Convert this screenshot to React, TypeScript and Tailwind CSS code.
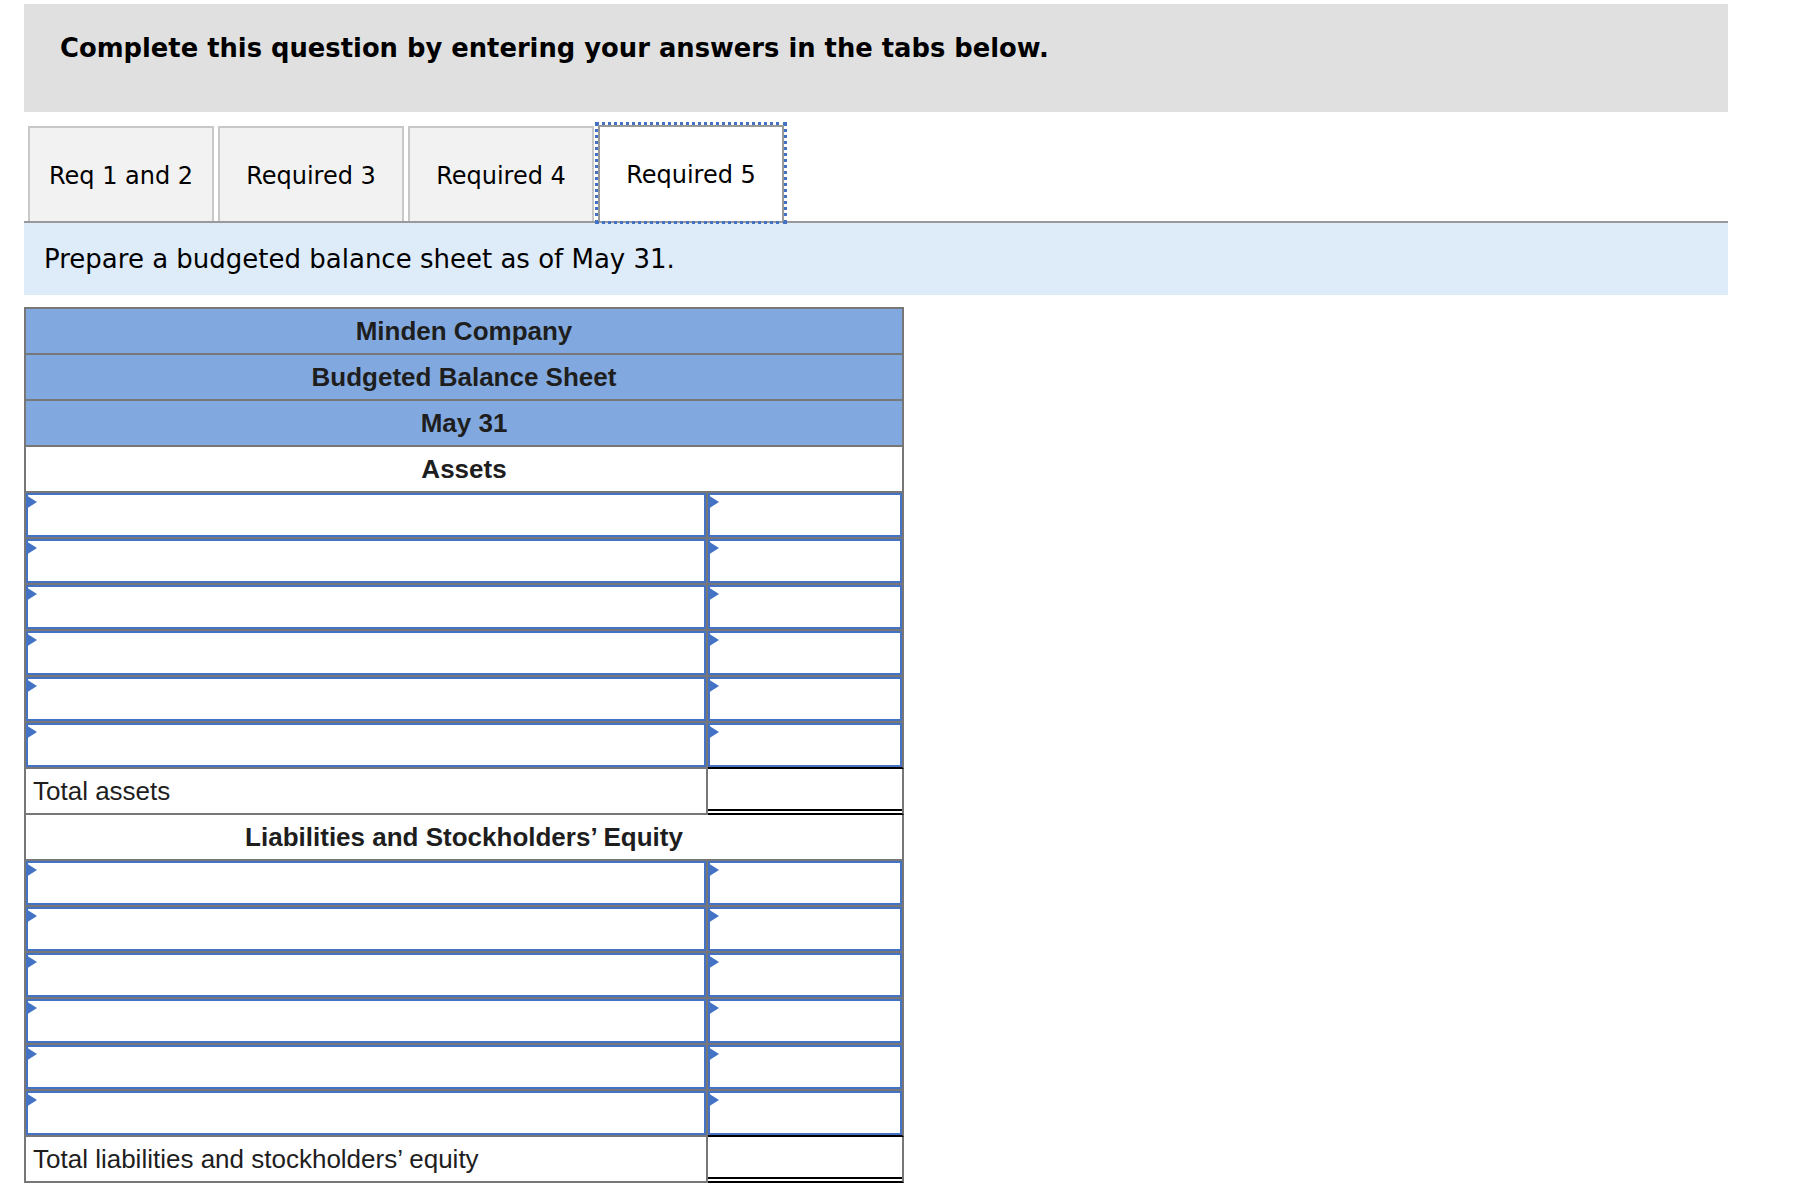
import React from "react";

const VERDANA = { fontFamily: '"DejaVu Sans", Verdana, sans-serif' };
const ARIAL = { fontFamily: '"Liberation Sans", Arial, sans-serif' };

function Tri() {
  return (
    <svg
      className="absolute left-[-2px] top-0"
      width="11"
      height="14"
      viewBox="0 0 11 14"
    >
      <polygon points="0,0 11,7 0,14" fill="#4472c4" />
    </svg>
  );
}

function InputRow({ last }: { last?: boolean }) {
  return (
    <div className="flex h-[46px]">
      <div className="w-[682px] border-r-2 border-b-2 border-r-[#777] border-b-[#777]">
        <div className="relative h-full border-2 border-[#4472c4] bg-white">
          <Tri />
        </div>
      </div>
      <div
        className={
          last
            ? "w-[196px] border-r-2 border-b-2 border-r-[#777] border-b-black"
            : "w-[196px] border-r-2 border-b-2 border-r-[#777] border-b-[#777]"
        }
      >
        <div className="relative h-full border-2 border-[#4472c4] bg-white">
          <Tri />
        </div>
      </div>
    </div>
  );
}

function HeaderRow({ text, blue }: { text: string; blue?: boolean }) {
  return (
    <div
      className={
        blue
          ? "flex h-[46px] items-center justify-center border-r-2 border-b-2 border-[#777] bg-[#82a9df] text-[26px] font-bold text-[#1e1e1e]"
          : "flex h-[46px] items-center justify-center border-r-2 border-b-2 border-[#777] bg-white text-[26px] font-bold text-[#1e1e1e]"
      }
    >
      {text}
    </div>
  );
}

function TotalRow({ text }: { text: string }) {
  return (
    <div className="flex h-[46px]">
      <div className="flex w-[682px] items-center border-r-2 border-b-2 border-[#777] pl-[7px] text-[26px] text-[#1e1e1e]">
        {text}
      </div>
      <div className="flex w-[196px] flex-col border-r-2 border-b-2 border-r-[#777] border-b-black">
        <div className="flex-1 border-b-2 border-black" />
        <div className="h-[2px]" />
      </div>
    </div>
  );
}

function Tab({ label, active }: { label: string; active?: boolean }) {
  if (active) {
    return (
      <div className="relative z-10 flex h-[96px] w-[186px] items-center justify-center border-x-2 border-t-2 border-[#999] bg-white pt-[2px] text-[24px] text-black outline-[3px] outline-dotted outline-[#4472c4]">
        {label}
      </div>
    );
  }
  return (
    <div className="flex h-[95px] w-[186px] items-center justify-center border-x-2 border-t-2 border-[#c8c8c8] bg-[#f2f2f2] pt-[2px] text-[24px] text-black">
      {label}
    </div>
  );
}

export default function App() {
  return (
    <div className="min-h-[1196px] w-[1800px] bg-white pl-[24px] pt-[4px]">
      <div className="w-[1704px]" style={VERDANA}>
        <div className="h-[108px] bg-[#e0e0e0] pl-[36px] pt-[29px] text-[25.8px] font-bold leading-[1.2] text-black">
          Complete this question by entering your answers in the tabs below.
        </div>
        <div className="mt-[13px] flex items-end gap-[4px] border-b-2 border-[#999] pl-[4px]">
          <Tab label="Req 1 and 2" />
          <Tab label="Required 3" />
          <Tab label="Required 4" />
          <Tab label="Required 5" active />
        </div>
        <div className="flex h-[72px] items-center bg-[#deebf8] pl-[20px] text-[26px] text-black">
          Prepare a budgeted balance sheet as of May 31.
        </div>
      </div>
      <div
        className="mt-[12px] w-[880px] border-l-2 border-t-2 border-[#777]"
        style={ARIAL}
      >
        <HeaderRow text="Minden Company" blue />
        <HeaderRow text="Budgeted Balance Sheet" blue />
        <HeaderRow text="May 31" blue />
        <HeaderRow text="Assets" />
        <InputRow />
        <InputRow />
        <InputRow />
        <InputRow />
        <InputRow />
        <InputRow last />
        <TotalRow text="Total assets" />
        <HeaderRow text="Liabilities and Stockholders’ Equity" />
        <InputRow />
        <InputRow />
        <InputRow />
        <InputRow />
        <InputRow />
        <InputRow last />
        <TotalRow text="Total liabilities and stockholders’ equity" />
      </div>
    </div>
  );
}
